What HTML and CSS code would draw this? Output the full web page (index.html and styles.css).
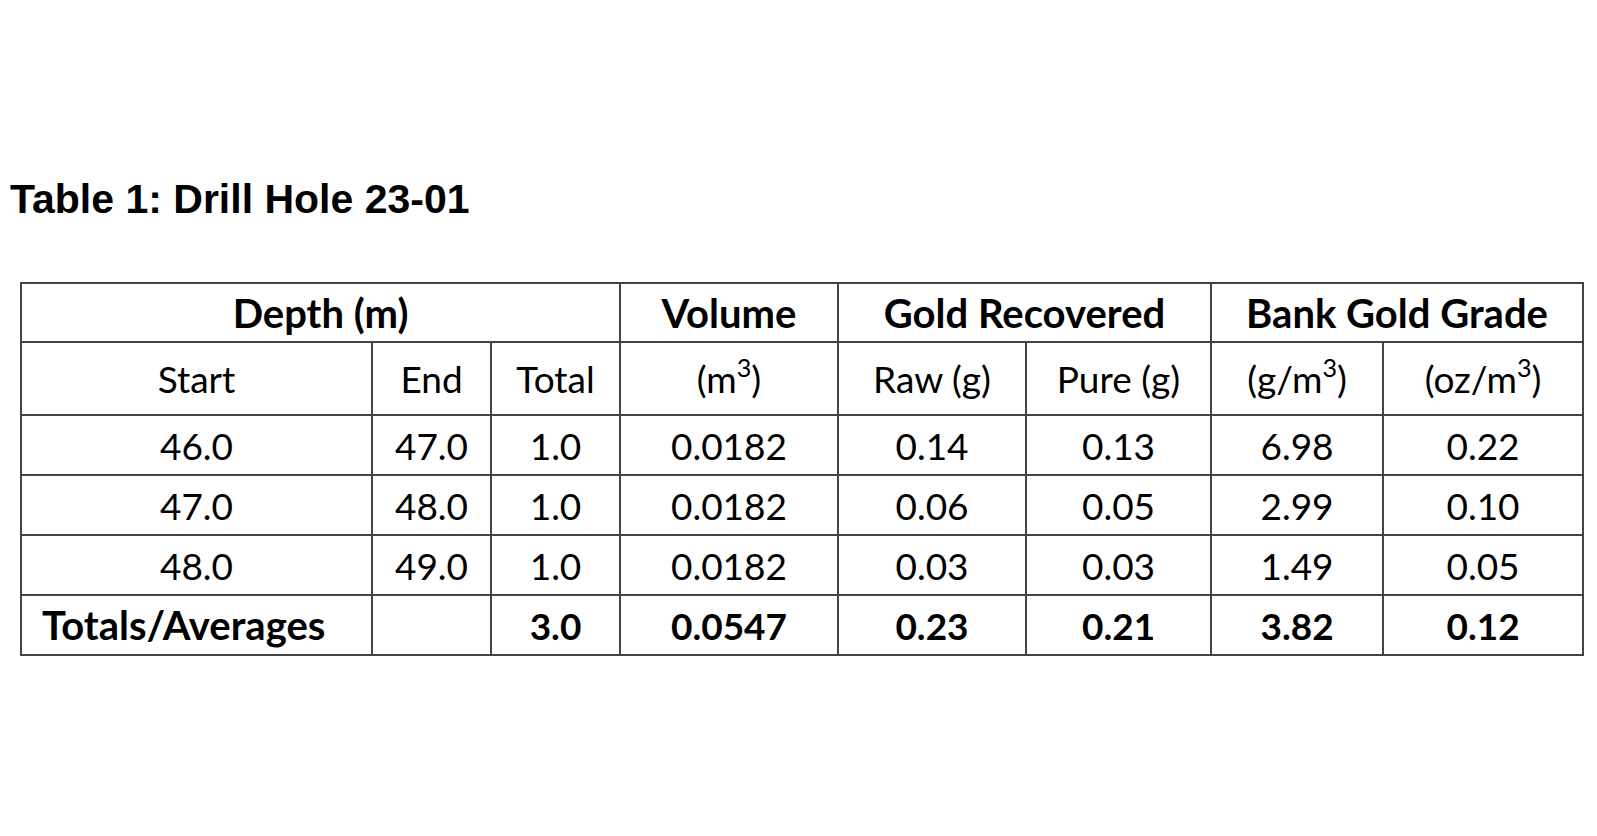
FILE: index.html
```html
<!DOCTYPE html>
<html>
  <head>
    <meta charset="UTF-8" />
    <title>Table 1: Drill Hole 23-01</title>
    <link rel="stylesheet" href="styles.css">
  </head>
  <body>
    <div class="page">
      <h1 class="caption">Table 1: Drill Hole 23-01</h1>

      <table class="drill-table">
        <colgroup>
          <col class="col-start" />
          <col class="col-end" />
          <col class="col-total" />
          <col class="col-volume" />
          <col class="col-raw" />
          <col class="col-pure" />
          <col class="col-gpm" />
          <col class="col-ozpm" />
        </colgroup>
        <thead>
          <tr class="row-group">
            <th colspan="3">Depth (m)</th>
            <th>Volume</th>
            <th colspan="2">Gold Recovered</th>
            <th colspan="2">Bank Gold Grade</th>
          </tr>
          <tr class="row-units">
            <td>Start</td>
            <td>End</td>
            <td>Total</td>
            <td>(m<sup>3</sup>)</td>
            <td>Raw (g)</td>
            <td>Pure (g)</td>
            <td>(g/m<sup>3</sup>)</td>
            <td>(oz/m<sup>3</sup>)</td>
          </tr>
        </thead>
        <tbody>
          <tr>
            <td>46.0</td>
            <td>47.0</td>
            <td>1.0</td>
            <td>0.0182</td>
            <td>0.14</td>
            <td>0.13</td>
            <td>6.98</td>
            <td>0.22</td>
          </tr>
          <tr>
            <td>47.0</td>
            <td>48.0</td>
            <td>1.0</td>
            <td>0.0182</td>
            <td>0.06</td>
            <td>0.05</td>
            <td>2.99</td>
            <td>0.10</td>
          </tr>
          <tr>
            <td>48.0</td>
            <td>49.0</td>
            <td>1.0</td>
            <td>0.0182</td>
            <td>0.03</td>
            <td>0.03</td>
            <td>1.49</td>
            <td>0.05</td>
          </tr>
          <tr class="row-totals">
            <td class="label">Totals/Averages</td>
            <td></td>
            <td>3.0</td>
            <td>0.0547</td>
            <td>0.23</td>
            <td>0.21</td>
            <td>3.82</td>
            <td>0.12</td>
          </tr>
        </tbody>
      </table>
    </div>
  </body>
</html>
```

FILE: styles.css
```css
* {
  margin: 0;
  padding: 0;
  box-sizing: border-box;
}

body {
  background: #fff;
  color: #000;
  width: 1597px;
  height: 836px;
  overflow: hidden;
}

.page {
  padding: 176px 0 0 20px;
}

.caption {
  font-family: "Liberation Sans", Arial, sans-serif;
  font-size: 41px;
  font-weight: 700;
  line-height: 46px;
  margin: 0 0 60px -10px;
}

.drill-table {
  width: 1564px;
  table-layout: fixed;
  border-collapse: collapse;
  font-family: Lato, "Noto Sans", sans-serif;
  font-size: 37px;
  color: #000;
}

.col-start { width: 351px; }
.col-end { width: 119px; }
.col-total { width: 129px; }
.col-volume { width: 218px; }
.col-raw { width: 188px; }
.col-pure { width: 185px; }
.col-gpm { width: 172px; }
.col-ozpm { width: 200px; }

.drill-table th,
.drill-table td {
  border: 2px solid #444;
  text-align: center;
  vertical-align: middle;
  font-weight: 400;
  line-height: 1;
  white-space: nowrap;
}

.drill-table th {
  font-size: 40px;
  font-weight: 700;
}

.drill-table tr {
  height: 60px;
}

.drill-table .row-group {
  height: 59px;
}

.drill-table .row-units {
  height: 73px;
}

.drill-table sup {
  font-size: 0.68em;
  line-height: 0;
  vertical-align: 0.62em;
}

.row-totals td {
  font-weight: 700;
}

.row-totals .label {
  font-size: 40px;
  text-align: left;
  padding-left: 20px;
}
```
